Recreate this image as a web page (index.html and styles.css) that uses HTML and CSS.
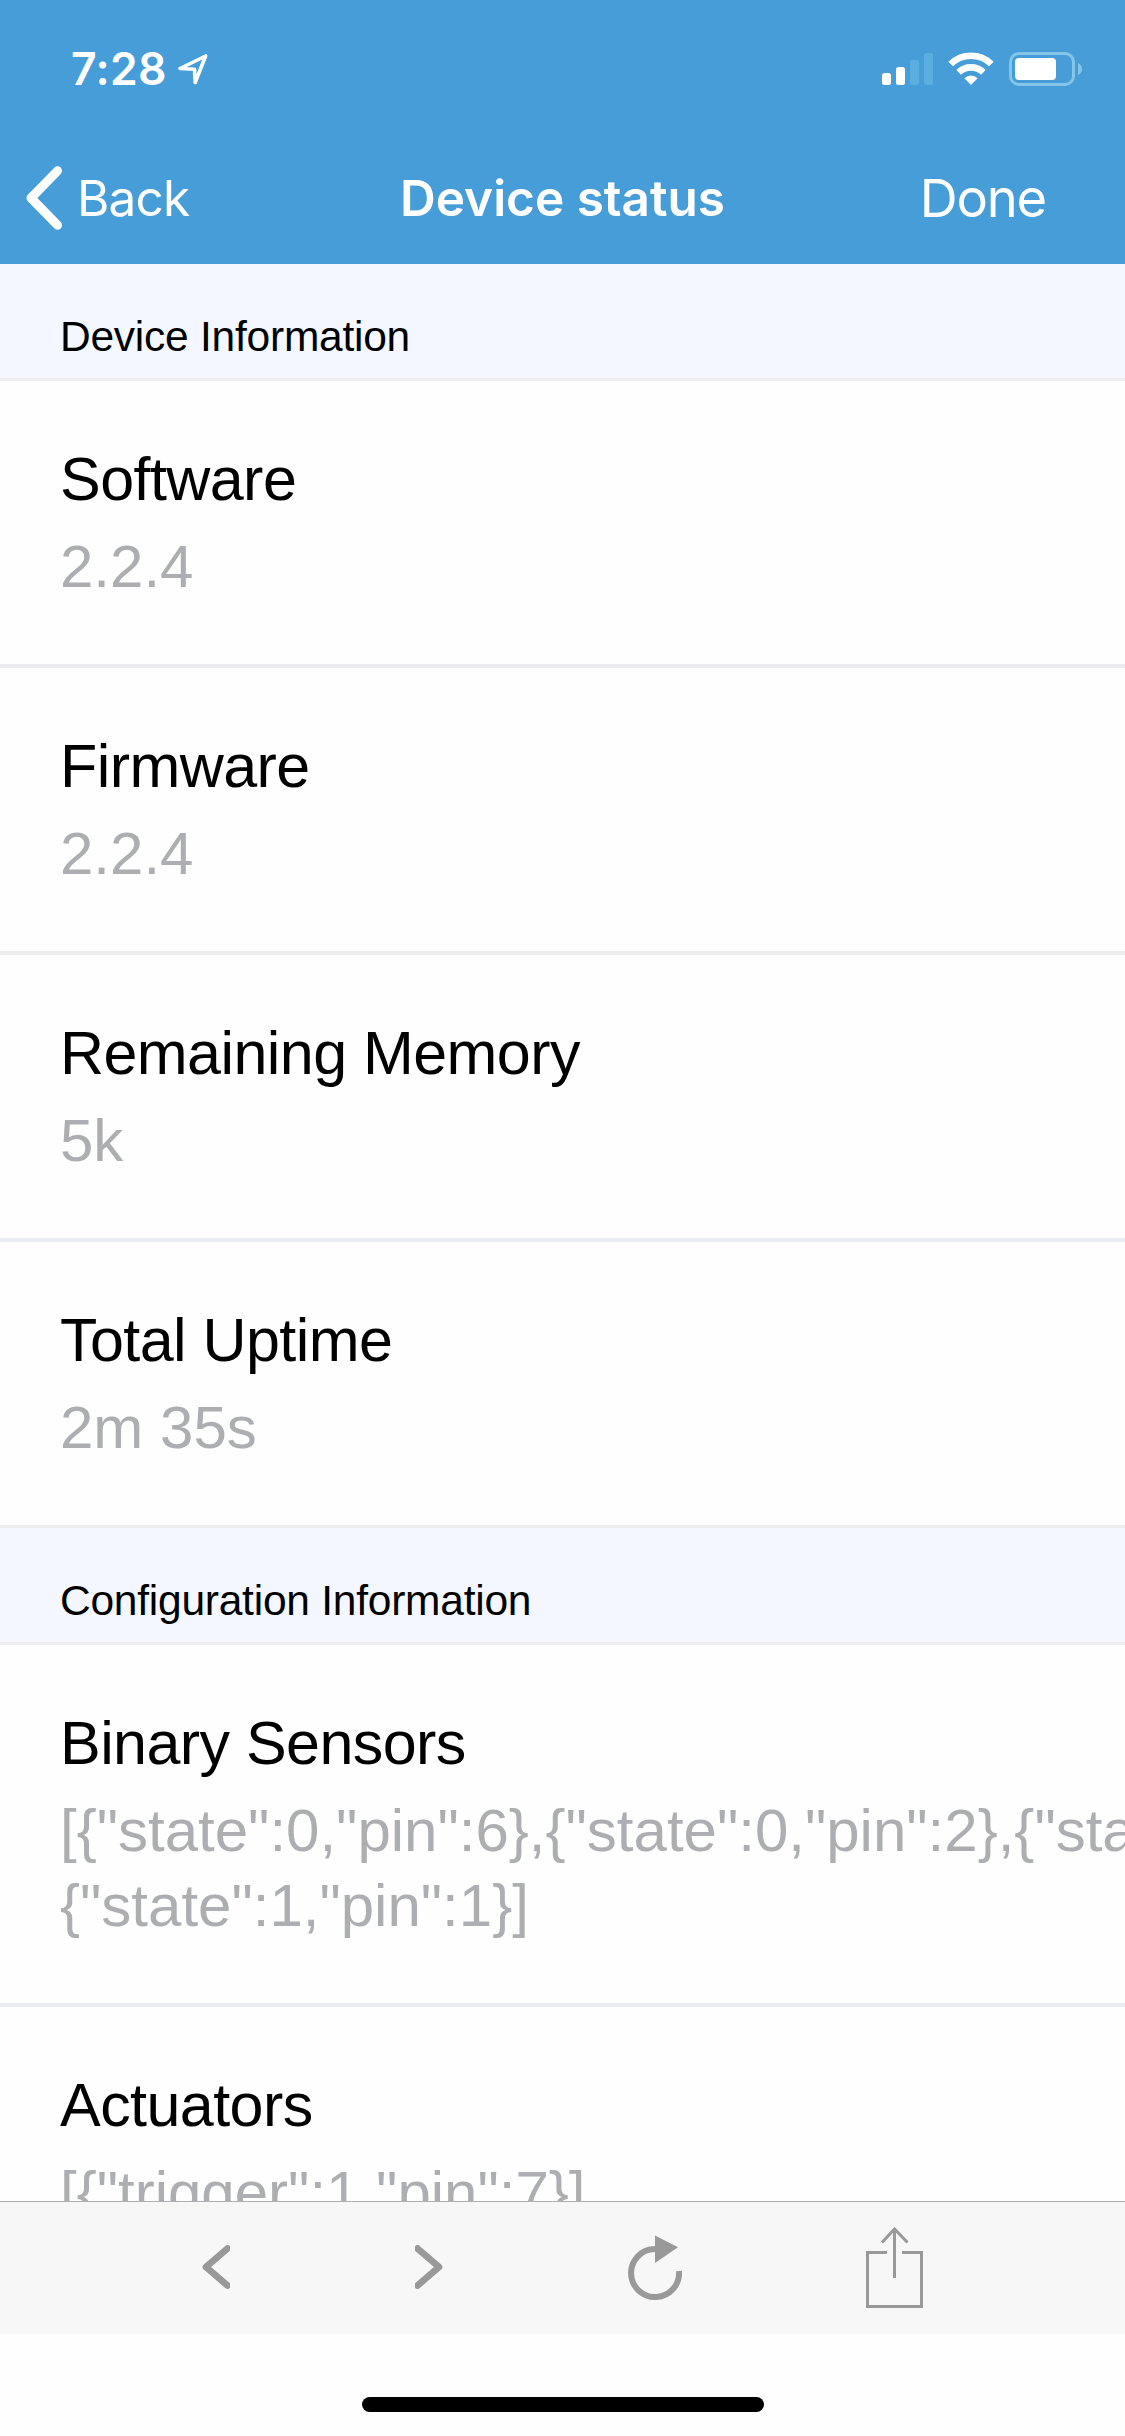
FILE: index.html
```html
<!DOCTYPE html>
<html lang="en">
<head>
<meta charset="utf-8">
<title>Device status</title>
<link rel="stylesheet" href="styles.css">
</head>
<body>
<div class="screen">
  <header class="header">
    <div class="status-bar">
      <div class="clock">
        <span class="time">7:28</span>
        <svg class="location" width="30" height="31" viewBox="0 0 30 31"><path d="M2 14.5 27.6 2 17.200 28.500 16.500 15.200Z" fill="none" stroke="#fff" stroke-width="3.600" stroke-linejoin="round"/></svg>
      </div>
      <div class="indicators">
        <svg width="51" height="34" viewBox="0 0 51 34"><g fill="#fff"><rect y="21" width="9" height="12" rx="2.500"/><rect x="14" y="15" width="9" height="18" rx="2.500"/></g><g fill="#5bafe0"><rect x="28" y="8" width="9" height="25" rx="2.500"/><rect x="42" y="1" width="9" height="32" rx="2.500"/></g></svg>
        <svg width="46" height="34" viewBox="0 0 46 34"><g fill="none" stroke="#fff" stroke-width="6.600"><path d="M2.700 12A29 29 0 0 1 43.300 12"/><path d="M10.700 20.300A17.800 17.800 0 0 1 35.300 20.300"/></g><path d="M23 33 16.400 26.200A9.500 9.500 0 0 1 29.600 26.200Z" fill="#fff"/></svg>
        <svg width="74" height="34" viewBox="0 0 74 34"><rect x="1.500" y="1.500" width="63" height="31" rx="8.500" fill="none" stroke="#84c5e8" stroke-width="3"/><rect x="6" y="6" width="41" height="22" rx="4" fill="#fff"/><path d="M69 11Q73 13 73 17T69 23Z" fill="#84c5e8"/></svg>
      </div>
    </div>
    <nav class="nav-bar">
      <div class="nav-back">
        <svg width="36" height="64" viewBox="0 0 36 64"><path d="M31.500 4.800 5 32 31.500 59.200" fill="none" stroke="#fff" stroke-width="9" stroke-linecap="round" stroke-linejoin="round"/></svg>
        <span class="nav-label">Back</span>
      </div>
      <h1 class="nav-title">Device status</h1>
      <span class="nav-done">Done</span>
    </nav>
  </header>

  <main class="content">
    <section class="group">
      <h2 class="group-title">Device Information</h2>
      <div class="row"><div class="label">Software</div><div class="value">2.2.4</div></div>
      <div class="row"><div class="label">Firmware</div><div class="value">2.2.4</div></div>
      <div class="row"><div class="label">Remaining Memory</div><div class="value">5k</div></div>
      <div class="row"><div class="label">Total Uptime</div><div class="value">2m 35s</div></div>
    </section>
    <section class="group">
      <h2 class="group-title">Configuration Information</h2>
      <div class="row"><div class="label">Binary Sensors</div><div class="value">[{"state":0,"pin":6},{"state":0,"pin":2},{"state"<br>{"state":1,"pin":1}]</div></div>
      <div class="row"><div class="label">Actuators</div><div class="value">[{"trigger":1,"pin":7}]</div></div>
    </section>
  </main>

  <footer class="toolbar">
    <svg width="28" height="44" viewBox="0 0 28 44"><path d="M25.500 3.500 4 22 25.500 40.500" fill="none" stroke="#999" stroke-width="6.800" stroke-linecap="round" stroke-linejoin="round"/></svg>
    <svg width="28" height="44" viewBox="0 0 28 44"><path d="M2.500 3.500 24 22 2.500 40.500" fill="none" stroke="#999" stroke-width="6.800" stroke-linecap="round" stroke-linejoin="round"/></svg>
    <svg class="reload" width="54" height="66" viewBox="0 0 54 66"><path d="M27 14A24 24 0 1 0 51 36" fill="none" stroke="#999" stroke-width="6"/><path d="M27 .5 50 12.300 27 28Z" fill="#999"/></svg>
    <svg class="share" width="57" height="81" viewBox="0 0 57 81"><path d="M21 25.500H1.500V79.500H55.500V25.500H36M28.500 51V3M16 15.500 28.500 2 41.500 15.500" fill="none" stroke="#999" stroke-width="3"/></svg>
  </footer>
  <div class="home-area"><div class="home-indicator"></div></div>
</div>
</body>
</html>
```
FILE: styles.css
```css
* { box-sizing: border-box; }

body {
  margin: 0;
  background: #fefefe;
  font-family: "Liberation Sans", Arial, sans-serif;
}

svg { display: block; flex: none; }

.screen {
  display: flex;
  flex-direction: column;
  width: 1125px;
  height: 2436px;
  overflow: hidden;
}

.header {
  flex: none;
  background: #479dd7;
  color: #fff;
  font-family: Inter, "Liberation Sans", sans-serif;
}

.status-bar {
  display: flex;
  justify-content: space-between;
  height: 132px;
  padding: 0 42px 0 71px;
}

.clock {
  display: flex;
  align-items: center;
  gap: 11px;
  height: 138px;
}

.time {
  font-size: 44.5px;
  font-weight: 600;
  line-height: 54px;
  letter-spacing: 0.3px;
  width: 96px;
  white-space: nowrap;
}

.indicators {
  display: flex;
  gap: 15px;
  padding-top: 52px;
}

.nav-bar {
  display: grid;
  grid-template-columns: 1fr auto 1fr;
  align-items: center;
  height: 132px;
  padding: 0 79px 0 26px;
}

.nav-back {
  display: flex;
  align-items: center;
  gap: 15px;
}

.nav-label {
  font-size: 49.500px;
  font-weight: 400;
  line-height: 60px;
  letter-spacing: -0.8px;
}

.nav-title {
  margin: 0 0 0 53px;
  font-size: 49.500px;
  font-weight: 600;
  line-height: 60px;
  letter-spacing: 0;
}

.nav-done {
  justify-self: end;
  font-size: 52.500px;
  font-weight: 400;
  line-height: 60px;
  letter-spacing: -1.2px;
}

.content {
  flex: none;
  height: 1937px;
  overflow: hidden;
}

.group-title {
  margin: 0;
  padding: 49px 60px 17px;
  border-bottom: 3px solid #ebedf0;
  background: #f4f7ff;
  font-size: 42.500px;
  font-weight: 400;
  line-height: 48px;
  letter-spacing: -0.240px;
}

.row {
  padding: 61px 0 60px 60px;
  border-bottom: 4px solid #ebecf0;
  font-size: 61px;
  line-height: 75px;
  letter-spacing: -0.560px;
  white-space: nowrap;
}

.row:last-child { border-bottom-width: 3px; }

.label { color: #000; }

.value {
  margin-top: 12px;
  font-size: 60px;
  letter-spacing: 0;
  color: #adaeb2;
}

.toolbar {
  display: flex;
  flex: none;
  gap: 185px;
  height: 133px;
  padding: 43px 0 0 202px;
  border-top: 1px solid #adaeb0;
  background: #f7f7f7;
}

.reload { margin-top: -10px; }

.share { margin: -18px 0 0 -1px; }

.home-area {
  display: flex;
  flex: 1;
  justify-content: center;
  padding-top: 63px;
}

.home-indicator {
  width: 402px;
  height: 15px;
  border-radius: 8px;
  background: #000;
}
```
